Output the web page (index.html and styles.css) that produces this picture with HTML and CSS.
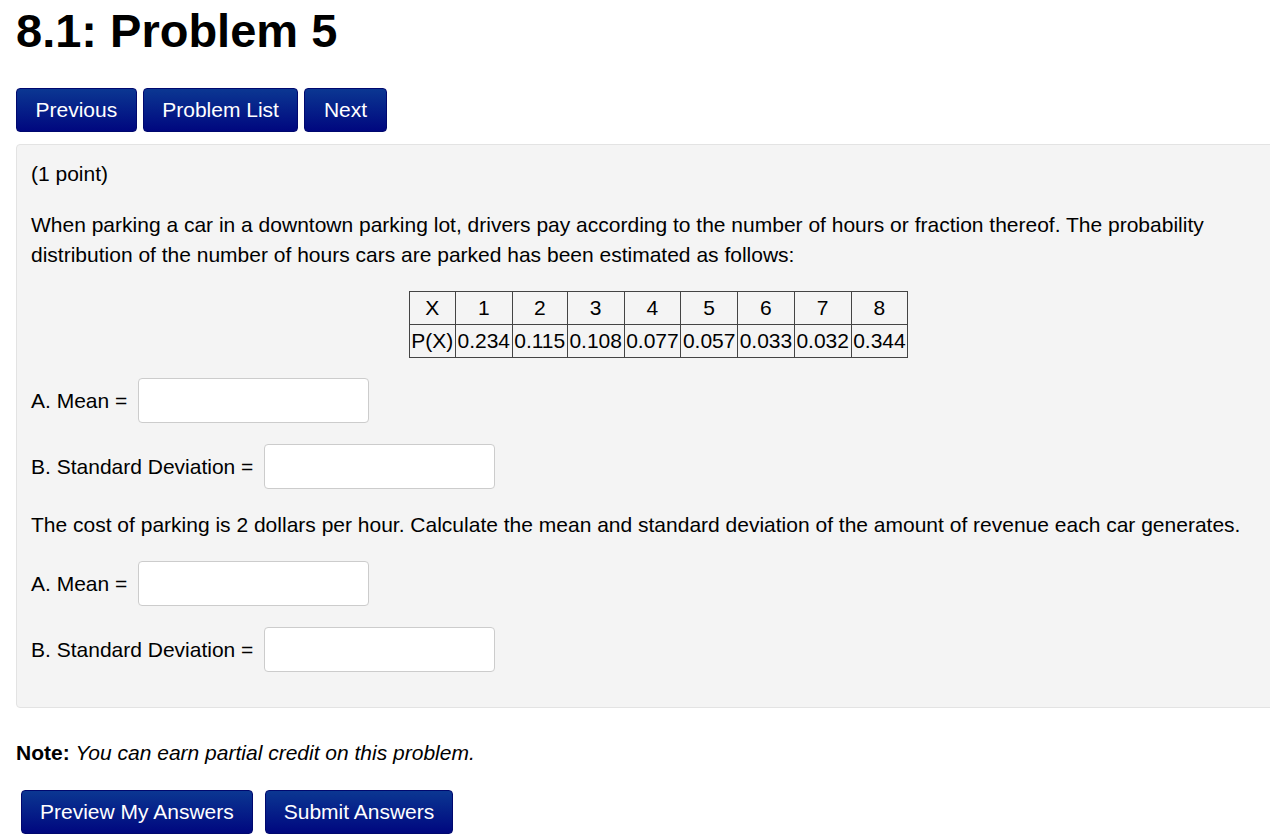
FILE: index.html
```html
<!DOCTYPE html>
<html>
<head>
<meta charset="utf-8">
<link rel="stylesheet" href="styles.css">
</head>
<body>
<div class="page">
  <h1 class="title">8.1: Problem 5</h1>
  <div class="nav">
    <a class="btn">Previous</a>
    <a class="btn">Problem List</a>
    <a class="btn">Next</a>
  </div>
  <div class="well">
    <p class="para">(1 point)</p>
    <p class="para">When parking a car in a downtown parking lot, drivers pay according to the number of hours or fraction thereof. The probability distribution of the number of hours cars are parked has been estimated as follows:</p>
    <div class="tablewrap">
      <table class="dist">
        <tr><td>X</td><td>1</td><td>2</td><td>3</td><td>4</td><td>5</td><td>6</td><td>7</td><td>8</td></tr>
        <tr><td>P(X)</td><td>0.234</td><td>0.115</td><td>0.108</td><td>0.077</td><td>0.057</td><td>0.033</td><td>0.032</td><td>0.344</td></tr>
      </table>
    </div>
    <div class="row"><span class="lbl">A. Mean =</span><input class="ans" type="text"></div>
    <div class="row"><span class="lbl">B. Standard Deviation =</span><input class="ans" type="text"></div>
    <p class="para">The cost of parking is 2 dollars per hour. Calculate the mean and standard deviation of the amount of revenue each car generates.</p>
    <div class="row"><span class="lbl">A. Mean =</span><input class="ans" type="text"></div>
    <div class="row last"><span class="lbl">B. Standard Deviation =</span><input class="ans" type="text"></div>
  </div>
  <p class="note"><b>Note:</b> <i>You can earn partial credit on this problem.</i></p>
  <div class="submit">
    <a class="btn">Preview My Answers</a>
    <a class="btn">Submit Answers</a>
  </div>
</div>
</body>
</html>
```
FILE: styles.css
```css
html, body {
  margin: 0;
  padding: 0;
  overflow: hidden;
  background: #fff;
}
body {
  font-family: "Liberation Sans", Arial, sans-serif;
  font-size: 21px;
  line-height: 30px;
  color: #000;
}
.page {
  padding: 0 0 0 16px;
  width: 1290px;
}
.title {
  margin: 0;
  padding-top: 2px;
  font-size: 47px;
  line-height: 57px;
  font-weight: bold;
}
.nav {
  display: flex;
  gap: 6px;
  margin-top: 29px;
}
.btn {
  display: inline-flex;
  align-items: center;
  height: 44px;
  box-sizing: border-box;
  padding: 0 18.5px;
  border: 1px solid #00086e;
  border-radius: 4px;
  background: linear-gradient(to bottom, #0b3792, #00077f);
  color: #fff;
  font-size: 21px;
  text-decoration: none;
}
.well {
  margin-top: 12px;
  width: 1286px;
  box-sizing: border-box;
  background: #f4f4f4;
  border: 1px solid #e3e3e3;
  border-radius: 4px;
  padding: 14px 15px 15px 14px;
}
.para {
  margin: 0 0 21px 0;
}
.tablewrap {
  display: flex;
  justify-content: center;
  margin: 21px 0 20px 0;
}
.dist {
  border-collapse: collapse;
  line-height: 24px;
}
.dist td {
  border: 1px solid #444;
  padding: 4px 1.6px;
  text-align: center;
}
.row {
  display: flex;
  align-items: center;
  margin-bottom: 21px;
}
.row.last {
  margin-bottom: 20px;
}
.lbl {
  margin-right: 11px;
}
.ans {
  width: 231px;
  height: 45px;
  box-sizing: border-box;
  border: 1px solid #cccccc;
  border-radius: 4px;
  background: #fff;
  margin: 0;
  padding: 4px 6px;
}
.note {
  margin: 30px 0 0 0;
}
.submit {
  display: flex;
  gap: 12px;
  margin-top: 22px;
  padding-left: 5px;
}
.submit .btn {
  padding: 0 18px;
}
```
